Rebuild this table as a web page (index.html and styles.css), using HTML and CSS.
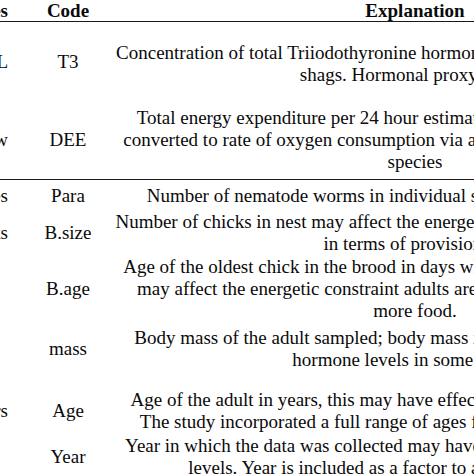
FILE: index.html
```html
<!DOCTYPE html>
<html lang="en">
<head>
<meta charset="utf-8">
<title>Variables table</title>
<link rel="stylesheet" href="styles.css">
</head>
<body>
<div class="frame">
  <table class="tbl">
    <colgroup>
      <col class="c-var">
      <col class="c-code">
      <col class="c-exp">
    </colgroup>
    <thead>
      <tr class="hdr">
        <th class="var">Variables</th>
        <th class="code">Code</th>
        <th class="exp">Explanation</th>
      </tr>
    </thead>
    <tbody>
      <tr class="r1">
        <td class="var">T3 (nmol/L</td>
        <td class="code">T3</td>
        <td class="exp">Concentration of total Triiodothyronine hormone in plasma of breeding adults;<br>shags. Hormonal proxy for T3</td>
      </tr>
      <tr class="r2">
        <td class="var">kJ/day kJw</td>
        <td class="code">DEE</td>
        <td class="exp">Total energy expenditure per 24 hour estimated via doubly labelled water<br>converted to rate of oxygen consumption via an equation specific to the shag<br>species</td>
      </tr>
      <tr class="r3">
        <td class="var">Parasites</td>
        <td class="code">Para</td>
        <td class="exp">Number of nematode worms in individual stomachs (the parasite load)</td>
      </tr>
      <tr class="r4">
        <td class="var">Chicks</td>
        <td class="code">B.size</td>
        <td class="exp">Number of chicks in nest may affect the energetic constraint faced by adults so<br>in terms of provisioning</td>
      </tr>
      <tr class="r5">
        <td class="var"></td>
        <td class="code">B.age</td>
        <td class="exp">Age of the oldest chick in the brood in days which shows chick demand; this<br>may affect the energetic constraint adults are under as old chicks demand<br>more food.</td>
      </tr>
      <tr class="r6">
        <td class="var"></td>
        <td class="code">mass</td>
        <td class="exp">Body mass of the adult sampled; body mass is also known to be related to<br>hormone levels in some species.</td>
      </tr>
      <tr class="r7">
        <td class="var">Years</td>
        <td class="code">Age</td>
        <td class="exp">Age of the adult in years, this may have effect on hormone levels and DEE<br>The study incorporated a full range of ages from young to very old birds</td>
      </tr>
      <tr class="r8">
        <td class="var"></td>
        <td class="code">Year</td>
        <td class="exp">Year in which the data was collected may have an effect on hormone and T3<br>levels. Year is included as a factor to account for this effect.</td>
      </tr>
    </tbody>
  </table>
</div>
</body>
</html>
```
FILE: styles.css
```css
html, body {
  margin: 0;
  padding: 0;
  background: #ffffff;
}

.frame {
  width: 474px;
  height: 474px;
  overflow: hidden;
  background: #ffffff;
}

.tbl {
  border-collapse: collapse;
  table-layout: fixed;
  width: 930px;
  margin-left: -200px;
  font-family: "Liberation Serif", "Times New Roman", serif;
  font-size: 19px;
  line-height: 22px;
  color: #0a0a0a;
}

.c-var { width: 236px; }
.c-code { width: 64px; }
.c-exp { width: 630px; }

.tbl th,
.tbl td {
  padding: 0;
  vertical-align: middle;
  white-space: nowrap;
  overflow: hidden;
}

.tbl .var {
  text-align: right;
  padding-right: 28px;
}

.tbl .code,
.tbl .exp {
  text-align: center;
}

.hdr th {
  font-weight: bold;
  line-height: 21px;
  border-bottom: 1px solid #1a1a1a;
}

.r1 td { padding-top: 20px; padding-bottom: 8px; }
.r1 td.var,
.r1 td.code { padding-top: 16px; }

.r2 td {
  padding-top: 13px;
  padding-bottom: 6px;
  border-bottom: 1px solid #1a1a1a;
}

.r3 td { padding-top: 5px; padding-bottom: 2px; }
.r4 td { padding-top: 2px; padding-bottom: 0; }
.r5 td { padding-top: 1px; padding-bottom: 1px; }
.r6 td { padding-top: 4px; padding-bottom: 8px; }
.r7 td { padding-top: 10px; padding-bottom: 0; }
.r8 td { padding-top: 2px; }
```
